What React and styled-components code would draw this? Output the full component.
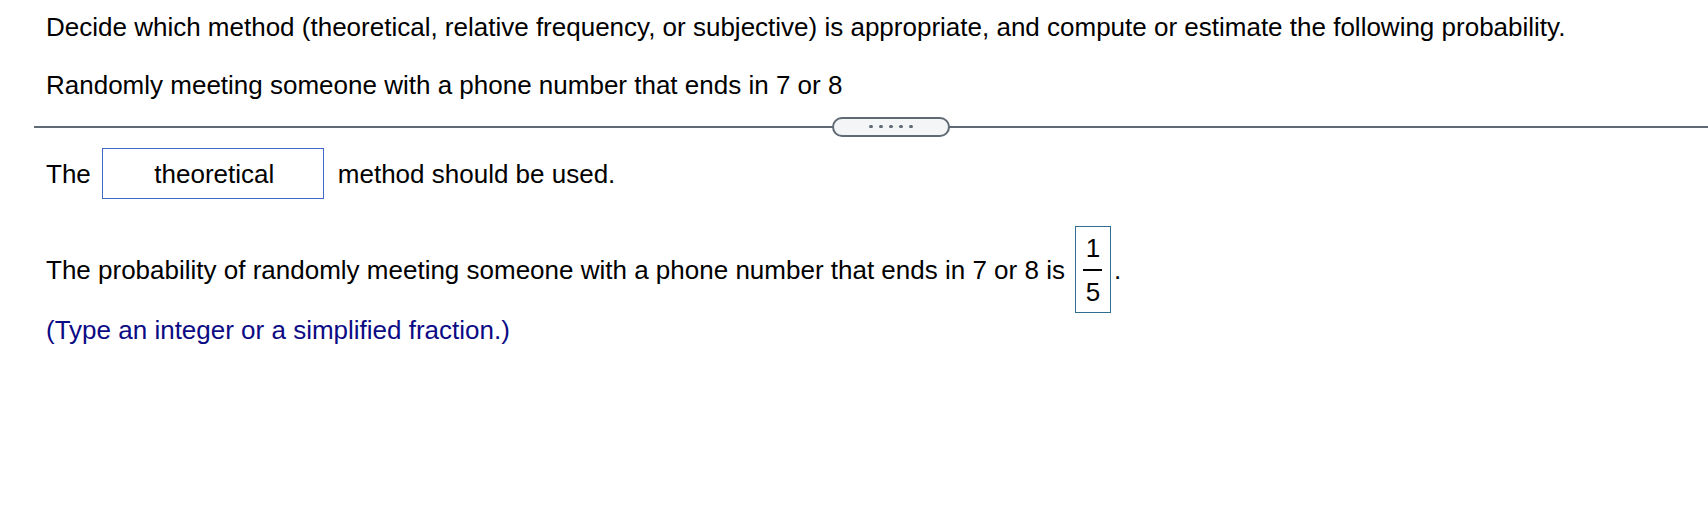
import React from "react";
import styled, { createGlobalStyle } from "styled-components";

const Global = createGlobalStyle`
  html, body { margin: 0; padding: 0; background: #fff; }
  body { font-family: "Liberation Sans", Arial, Helvetica, sans-serif; color: #000; }
`;

const Page = styled.div`
  width: 1708px;
  height: 512px;
  overflow: hidden;
  box-sizing: border-box;
  padding-top: 12px;
  font-size: 26px;
  line-height: 30px;
`;

const Question = styled.div`
  padding-left: 46px;
`;

const Para = styled.p`
  margin: 0 0 ${(p) => p.$gap || 0}px 0;
`;

const DividerRow = styled.div`
  position: relative;
  margin-left: 34px;
  margin-top: 17px;
  height: 19px;
  display: flex;
  align-items: center;
  justify-content: center;
  &::before {
    content: "";
    position: absolute;
    left: 0;
    right: 0;
    top: 50%;
    height: 2px;
    margin-top: -1px;
    background: #5f6a75;
  }
`;

const Pill = styled.button`
  position: relative;
  margin-left: 40px;
  width: 118px;
  height: 20px;
  box-sizing: border-box;
  border: 2px solid #5f6a75;
  border-radius: 10px;
  background: #f4f5f7;
  display: flex;
  align-items: center;
  justify-content: center;
  gap: 6.5px;
  padding: 0;
`;

const Dot = styled.span`
  width: 3.5px;
  height: 3.5px;
  border-radius: 50%;
  background: #5f6a75;
`;

const Answer = styled.div`
  padding-left: 46px;
`;

const Row = styled.div`
  display: flex;
  align-items: center;
  margin-top: ${(p) => p.$top || 0}px;
`;

const Box = styled.span`
  display: inline-flex;
  align-items: center;
  justify-content: center;
  box-sizing: border-box;
  width: 222px;
  height: 51px;
  margin: 0 14px 0 11px;
  padding-left: 3px;
  border: 1.5px solid #3d69c6;
`;

const FracBox = styled.span`
  display: inline-flex;
  flex-direction: column;
  align-items: center;
  justify-content: center;
  box-sizing: border-box;
  width: 36px;
  height: 87px;
  margin: 0 3px 0 10px;
  border: 1.5px solid #2f6e8e;
`;

const Num = styled.span`
  display: block;
  line-height: 30px;
`;

const Bar = styled.span`
  display: block;
  width: 19px;
  height: 2px;
  background: #000;
  margin: 6px 0 6px;
`;

const Hint = styled.p`
  margin: 2px 0 0 0;
  color: #0b0b85;
`;

export default function App() {
  return (
    <Page>
      <Global />
      <Question>
        <Para $gap={28}>
          Decide which method (theoretical, relative frequency, or subjective) is appropriate, and compute or estimate the following probability.
        </Para>
        <Para>Randomly meeting someone with a phone number that ends in 7 or 8</Para>
      </Question>
      <DividerRow>
        <Pill aria-label="more">
          <Dot />
          <Dot />
          <Dot />
          <Dot />
          <Dot />
        </Pill>
      </DividerRow>
      <Answer>
        <Row $top={12}>
          The
          <Box>theoretical</Box>
          method should be used.
        </Row>
        <Row $top={27}>
          The probability of randomly meeting someone with a phone number that ends in 7 or 8 is
          <FracBox>
            <Num>1</Num>
            <Bar />
            <Num>5</Num>
          </FracBox>
          .
        </Row>
        <Hint>(Type an integer or a simplified fraction.)</Hint>
      </Answer>
    </Page>
  );
}
